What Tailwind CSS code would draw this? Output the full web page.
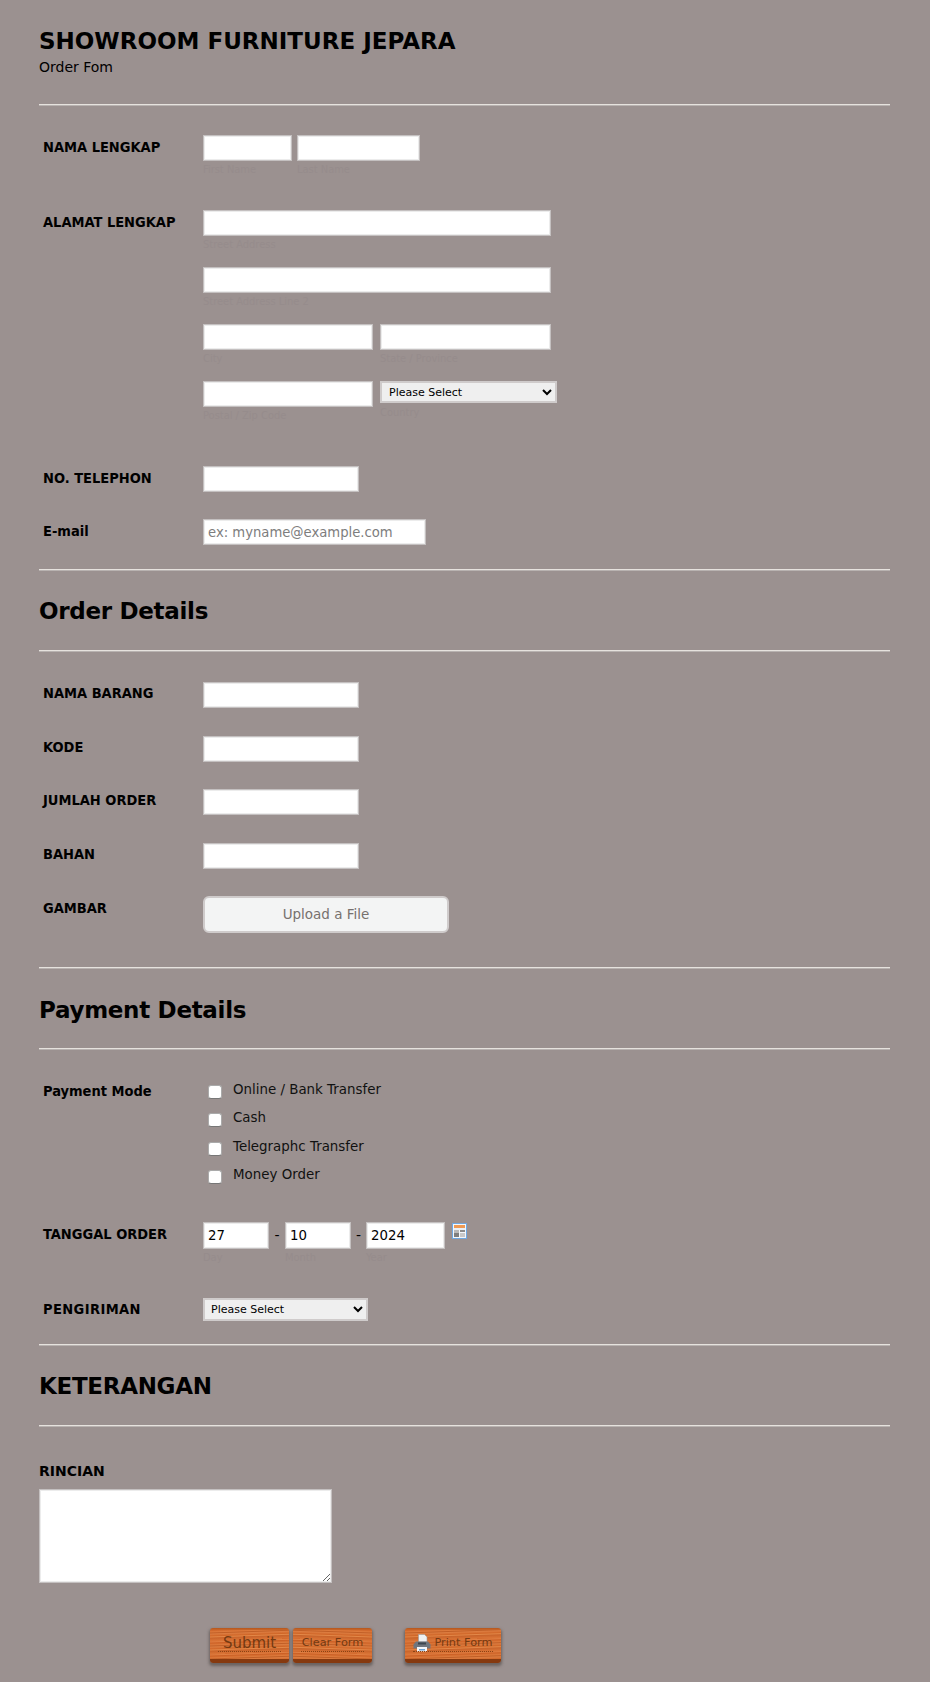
<!DOCTYPE html>
<html>
<head>
<meta charset="utf-8">
<script src="https://cdn.jsdelivr.net/npm/@tailwindcss/browser@4"></script>
</head>
<body class="bg-[#9b9190] font-['DejaVu_Sans',sans-serif] text-black">
<div class="w-[930px] h-[1682px] pl-[39px] overflow-hidden">

  <header class="h-[104px] pt-[27px]">
    <h1 class="text-[23px] leading-[28px] font-bold">SHOWROOM FURNITURE JEPARA</h1>
    <p class="mt-[4px] text-[14px] leading-[16px]">Order Fom</p>
  </header>
  <div class="h-[2px] w-[851px] border-t border-b border-t-[#e6e2de] border-b-[#b8b2b0]"></div>

  <!-- Nama -->
  <div class="flex mt-[29px]">
    <label class="w-[164px] pl-[4px] pt-[2px] font-stretch-condensed text-[14.5px] leading-[20px] font-bold">NAMA LENGKAP</label>
    <div class="flex gap-[5px]">
      <div class="flex flex-col w-[89px]">
        <input class="h-[26px] bg-white border border-[#c4c0c0] shadow-[inset_0_0_0_1px_#ececec]">
        <span class="mt-[2px] font-stretch-condensed text-[11px] leading-[14px] text-[#968c8c]">First Name</span>
      </div>
      <div class="flex flex-col w-[123px]">
        <input class="h-[26px] bg-white border border-[#c4c0c0] shadow-[inset_0_0_0_1px_#ececec]">
        <span class="mt-[2px] font-stretch-condensed text-[11px] leading-[14px] text-[#968c8c]">Last Name</span>
      </div>
    </div>
  </div>

  <!-- Alamat -->
  <div class="flex mt-[33px]">
    <label class="w-[164px] pl-[4px] pt-[2px] font-stretch-condensed text-[14.5px] leading-[20px] font-bold">ALAMAT LENGKAP</label>
    <div class="flex flex-col gap-[15px]">
      <div class="flex flex-col w-[348px]">
        <input class="h-[26px] bg-white border border-[#c4c0c0] shadow-[inset_0_0_0_1px_#ececec]">
        <span class="mt-[2px] font-stretch-condensed text-[11px] leading-[14px] text-[#968c8c]">Street Address</span>
      </div>
      <div class="flex flex-col w-[348px]">
        <input class="h-[26px] bg-white border border-[#c4c0c0] shadow-[inset_0_0_0_1px_#ececec]">
        <span class="mt-[2px] font-stretch-condensed text-[11px] leading-[14px] text-[#968c8c]">Street Address Line 2</span>
      </div>
      <div class="flex gap-[7px]">
        <div class="flex flex-col w-[170px]">
          <input class="h-[26px] bg-white border border-[#c4c0c0] shadow-[inset_0_0_0_1px_#ececec]">
          <span class="mt-[2px] font-stretch-condensed text-[11px] leading-[14px] text-[#968c8c]">City</span>
        </div>
        <div class="flex flex-col w-[171px]">
          <input class="h-[26px] bg-white border border-[#c4c0c0] shadow-[inset_0_0_0_1px_#ececec]">
          <span class="mt-[2px] font-stretch-condensed text-[11px] leading-[14px] text-[#968c8c]">State / Province</span>
        </div>
      </div>
      <div class="flex gap-[7px]">
        <div class="flex flex-col w-[170px]">
          <input class="h-[26px] bg-white border border-[#c4c0c0] shadow-[inset_0_0_0_1px_#ececec]">
          <span class="mt-[2px] font-stretch-condensed text-[11px] leading-[14px] text-[#968c8c]">Postal / Zip Code</span>
        </div>
        <div class="flex flex-col w-[177px]">
          <select class="h-[22px] bg-[#efefef] border-2 border-[#cfcbcb] text-[11px] pl-[3px]"><option>Please Select</option></select>
          <span class="mt-[3px] font-stretch-condensed text-[11px] leading-[14px] text-[#968c8c]">Country</span>
        </div>
      </div>
    </div>
  </div>

  <!-- Telephone -->
  <div class="flex mt-[43px]">
    <label class="w-[164px] pl-[4px] pt-[2px] font-stretch-condensed text-[14.5px] leading-[20px] font-bold">NO. TELEPHON</label>
    <input class="w-[156px] h-[26px] bg-white border border-[#c4c0c0] shadow-[inset_0_0_0_1px_#ececec]">
  </div>
  <div class="flex mt-[27px]">
    <label class="w-[164px] pl-[4px] pt-[2px] font-stretch-condensed text-[14.5px] leading-[20px] font-bold">E-mail</label>
    <input placeholder="ex: myname@example.com" class="w-[223px] h-[26px] px-[4px] bg-white border border-[#c4c0c0] shadow-[inset_0_0_0_1px_#ececec] text-[13.2px] placeholder:text-[#7d7d7d]">
  </div>
  <div class="h-[2px] w-[851px] mt-[24px] border-t border-b border-t-[#e6e2de] border-b-[#b8b2b0]"></div>

  <!-- Order Details -->
  <h2 class="h-[79px] pt-[24px] text-[23px] tracking-[-0.3px] leading-[32px] font-bold">Order Details</h2>
  <div class="h-[2px] w-[851px] border-t border-b border-t-[#e6e2de] border-b-[#b8b2b0]"></div>

  <div class="flex mt-[30px]">
    <label class="w-[164px] pl-[4px] pt-[1px] font-stretch-condensed text-[14.5px] leading-[20px] font-bold">NAMA BARANG</label>
    <input class="w-[156px] h-[26px] bg-white border border-[#c4c0c0] shadow-[inset_0_0_0_1px_#ececec]">
  </div>
  <div class="flex mt-[28px]">
    <label class="w-[164px] pl-[4px] pt-[1px] font-stretch-condensed text-[14.5px] leading-[20px] font-bold">KODE</label>
    <input class="w-[156px] h-[26px] bg-white border border-[#c4c0c0] shadow-[inset_0_0_0_1px_#ececec]">
  </div>
  <div class="flex mt-[27px]">
    <label class="w-[164px] pl-[4px] pt-[1px] font-stretch-condensed text-[14.5px] leading-[20px] font-bold">JUMLAH ORDER</label>
    <input class="w-[156px] h-[26px] bg-white border border-[#c4c0c0] shadow-[inset_0_0_0_1px_#ececec]">
  </div>
  <div class="flex mt-[28px]">
    <label class="w-[164px] pl-[4px] pt-[1px] font-stretch-condensed text-[14.5px] leading-[20px] font-bold">BAHAN</label>
    <input class="w-[156px] h-[26px] bg-white border border-[#c4c0c0] shadow-[inset_0_0_0_1px_#ececec]">
  </div>
  <div class="flex mt-[27px]">
    <label class="w-[164px] pl-[4px] pt-[2px] font-stretch-condensed text-[14.5px] leading-[20px] font-bold">GAMBAR</label>
    <div class="w-[246px] h-[37px] flex items-center justify-center rounded-[6px] bg-[#f3f4f4] border-2 border-[#cfcbcb] text-[13.5px] text-[#77716e]">Upload a File</div>
  </div>
  <div class="h-[2px] w-[851px] mt-[34px] border-t border-b border-t-[#e6e2de] border-b-[#b8b2b0]"></div>

  <!-- Payment -->
  <h2 class="h-[79px] pt-[25px] text-[23px] tracking-[-0.3px] leading-[32px] font-bold">Payment Details</h2>
  <div class="h-[2px] w-[851px] border-t border-b border-t-[#e6e2de] border-b-[#b8b2b0]"></div>

  <div class="flex mt-[31px]">
    <label class="w-[164px] pl-[4px] font-stretch-condensed text-[14.5px] leading-[20px] font-bold">Payment Mode</label>
    <div class="flex flex-col gap-[14.3px] pl-[5px]">
      <label class="flex items-start h-[14px] gap-[11px] text-[13.4px] leading-[14px] text-[#111]"><input type="checkbox" class="appearance-none w-[14px] h-[14px] mt-[4px] bg-white rounded-[3px] border border-[#aaa] border-b-[#777]"><span class="mt-[2px]">Online / Bank Transfer</span></label>
      <label class="flex items-start h-[14px] gap-[11px] text-[13.4px] leading-[14px] text-[#111]"><input type="checkbox" class="appearance-none w-[14px] h-[14px] mt-[4px] bg-white rounded-[3px] border border-[#aaa] border-b-[#777]"><span class="mt-[2px]">Cash</span></label>
      <label class="flex items-start h-[14px] gap-[11px] text-[13.4px] leading-[14px] text-[#111]"><input type="checkbox" class="appearance-none w-[14px] h-[14px] mt-[4px] bg-white rounded-[3px] border border-[#aaa] border-b-[#777]"><span class="mt-[2px]">Telegraphc Transfer</span></label>
      <label class="flex items-start h-[14px] gap-[11px] text-[13.4px] leading-[14px] text-[#111]"><input type="checkbox" class="appearance-none w-[14px] h-[14px] mt-[4px] bg-white rounded-[3px] border border-[#aaa] border-b-[#777]"><span class="mt-[2px]">Money Order</span></label>
    </div>
  </div>

  <!-- Tanggal -->
  <div class="flex mt-[42px]">
    <label class="w-[164px] pl-[4px] pt-[2px] font-stretch-condensed text-[14.5px] leading-[20px] font-bold">TANGGAL ORDER</label>
    <div class="flex items-start">
      <div class="flex flex-col w-[66px]">
        <input value="27" class="h-[27px] px-[4px] bg-white border border-[#c4c0c0] shadow-[inset_0_0_0_1px_#ececec] text-[13.3px]">
        <span class="mt-[2px] font-stretch-condensed text-[11px] leading-[14px] text-[#968c8c]">Day</span>
      </div>
      <span class="w-[16px] text-center text-[14px] leading-[26px]">-</span>
      <div class="flex flex-col w-[66px]">
        <input value="10" class="h-[27px] px-[4px] bg-white border border-[#c4c0c0] shadow-[inset_0_0_0_1px_#ececec] text-[13.3px]">
        <span class="mt-[2px] font-stretch-condensed text-[11px] leading-[14px] text-[#968c8c]">Month</span>
      </div>
      <span class="w-[15px] text-center text-[14px] leading-[26px]">-</span>
      <div class="flex flex-col w-[79px]">
        <input value="2024" class="h-[27px] px-[4px] bg-white border border-[#c4c0c0] shadow-[inset_0_0_0_1px_#ececec] text-[13.3px]">
        <span class="mt-[2px] font-stretch-condensed text-[11px] leading-[14px] text-[#968c8c]">Year</span>
      </div>
      <svg class="ml-[7px] mt-[1px]" width="15" height="16" viewBox="0 0 15 16">
        <rect x="0.5" y="0.5" width="14" height="15" fill="#f4f8fc" stroke="#6fa8e2"/>
        <rect x="2" y="2" width="11" height="3" fill="#ee9a55"/>
        <rect x="2" y="5.5" width="11" height="1" fill="#dfe8f0"/>
        <rect x="2" y="7" width="5" height="3" fill="#b9b9b9"/>
        <rect x="8" y="7" width="5" height="2" fill="#8c8c8c"/>
        <rect x="2" y="10" width="5" height="4" fill="#7f7f7f"/>
        <rect x="8" y="10" width="5" height="4" fill="#c9c9c9"/>
      </svg>
    </div>
  </div>

  <!-- Pengiriman -->
  <div class="flex mt-[33px]">
    <label class="w-[164px] pl-[4px] pt-[1px] font-stretch-condensed tracking-[0.4px] text-[14.5px] leading-[20px] font-bold">PENGIRIMAN</label>
    <select class="w-[165px] h-[23px] bg-[#efefef] border-2 border-[#cfcbcb] text-[11px] pl-[2px]"><option>Please Select</option></select>
  </div>
  <div class="h-[2px] w-[851px] mt-[23px] border-t border-b border-t-[#e6e2de] border-b-[#b8b2b0]"></div>

  <!-- Keterangan -->
  <h2 class="h-[79px] pt-[24px] text-[23px] tracking-[-0.3px] leading-[32px] font-bold">KETERANGAN</h2>
  <div class="h-[2px] w-[851px] border-t border-b border-t-[#e6e2de] border-b-[#b8b2b0]"></div>

  <label class="block mt-[34px] text-[14px] leading-[20px] font-bold">RINCIAN</label>
  <textarea class="block mt-[8px] w-[293px] h-[94px] bg-white border border-[#c4c0c0] shadow-[inset_0_0_0_1px_#ececec]"></textarea>

  <!-- Buttons -->
  <div class="flex mt-[45px] ml-[171px]">
    <button class="relative w-[79px] h-[35px] rounded-[3px] text-[15px] text-[#743a12] shadow-[0_2px_3px_1px_#6b6260] pb-[4px] bg-[linear-gradient(to_bottom,#b4561e_0,#c9672a_2px,transparent_2px,transparent_31px,#86390f_31px,#86390f_35px),repeating-linear-gradient(178deg,#d3692d_0,#e08044_1px,#cc6025_2px,#dd7a3c_4px,#c05e26_5px,#dc7c40_6px,#d06628_8px,#e38848_9px,#c8632a_10px,#da7436_13px)]">
      <span class="absolute left-[8px] right-[8px] top-[23px] border-t border-dotted border-[#8a4214]"></span>Submit</button>
    <button class="relative ml-[4px] w-[79px] h-[35px] rounded-[3px] text-[11.3px] text-[#743a12] shadow-[0_2px_3px_1px_#6b6260] pb-[4px] bg-[linear-gradient(to_bottom,#b4561e_0,#c9672a_2px,transparent_2px,transparent_31px,#86390f_31px,#86390f_35px),repeating-linear-gradient(182deg,#d3692d_0,#e08044_1px,#cc6025_2px,#dd7a3c_4px,#c05e26_5px,#dc7c40_6px,#d06628_8px,#e38848_9px,#c8632a_10px,#da7436_13px)]">
      <span class="absolute left-[8px] right-[8px] top-[23px] border-t border-dotted border-[#8a4214]"></span>Clear Form</button>
    <button class="relative ml-[33px] w-[96px] h-[35px] rounded-[3px] flex items-center justify-center gap-[3px] text-[11.3px] text-[#743a12] shadow-[0_2px_3px_1px_#6b6260] pb-[4px] bg-[linear-gradient(to_bottom,#b4561e_0,#c9672a_2px,transparent_2px,transparent_31px,#86390f_31px,#86390f_35px),repeating-linear-gradient(178deg,#d3692d_0,#e08044_1px,#cc6025_2px,#dd7a3c_4px,#c05e26_5px,#dc7c40_6px,#d06628_8px,#e38848_9px,#c8632a_10px,#da7436_13px)]">
      <span class="absolute left-[8px] right-[8px] top-[23px] border-t border-dotted border-[#8a4214]"></span>
      <svg width="18" height="18" viewBox="0 0 18 18">
        <path d="M5.5 0.5h6l2.5 2.5v5h-8.5z" fill="#eef0f2" stroke="#9a9a9a" stroke-width="0.6"/>
        <path d="M3 7.5h12l2.5 3v4h-17v-4z" fill="#70767e"/>
        <rect x="5" y="8.5" width="8" height="2" fill="#3c4650"/>
        <rect x="4" y="13" width="10" height="4.5" fill="#f5f7fa"/>
        <rect x="6" y="15" width="6" height="1.5" fill="#6aa5d8"/>
      </svg>
      <span>Print Form</span>
    </button>
  </div>
</div>
</body>
</html>
